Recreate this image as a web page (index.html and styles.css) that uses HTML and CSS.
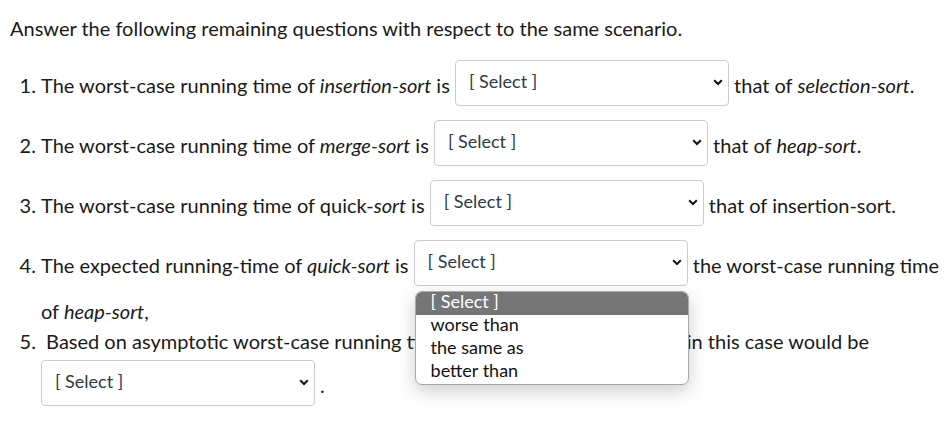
FILE: index.html
```html
<!DOCTYPE html>
<html lang="en">
<head>
<meta charset="utf-8">
<title>Quiz</title>
<link rel="stylesheet" href="styles.css">
</head>
<body>
<div class="page">
  <p class="intro">Answer the following remaining questions with respect to the same scenario.</p>
  <ol class="questions">
    <li>The worst-case running time of <em>insertion-sort</em> is <span class="sel"><span class="sel-text">[ Select ]</span><svg class="chev" width="10" height="7" viewBox="0 0 10 7"><path d="M1.2 1.3 L5 5 L8.8 1.3" fill="none" stroke="#111" stroke-width="2"/></svg></span> that of <em>selection-sort</em>.</li>
    <li>The worst-case running time of <em>merge-sort</em> is <span class="sel"><span class="sel-text">[ Select ]</span><svg class="chev" width="10" height="7" viewBox="0 0 10 7"><path d="M1.2 1.3 L5 5 L8.8 1.3" fill="none" stroke="#111" stroke-width="2"/></svg></span> that of <em>heap-sort</em>.</li>
    <li>The worst-case running time of quick-<em>sort</em> is <span class="sel"><span class="sel-text">[ Select ]</span><svg class="chev" width="10" height="7" viewBox="0 0 10 7"><path d="M1.2 1.3 L5 5 L8.8 1.3" fill="none" stroke="#111" stroke-width="2"/></svg></span> that of insertion-sort.</li>
    <li>The expected running-time of <em>quick-sort</em> is <span class="sel sel-open"><span class="sel-text">[ Select ]</span><svg class="chev" width="10" height="7" viewBox="0 0 10 7"><path d="M1.2 1.3 L5 5 L8.8 1.3" fill="none" stroke="#111" stroke-width="2"/></svg><span class="listbox"><span class="opt opt-active">[ Select ]</span><span class="opt">worse than</span><span class="opt">the same as</span><span class="opt">better than</span></span></span> the worst-case running time of <em>heap-sort</em>,</li>
    <li>&nbsp;Based on asymptotic worst-case running time, the best sorting algorithm in this case would be <span class="sel"><span class="sel-text">[ Select ]</span><svg class="chev" width="10" height="7" viewBox="0 0 10 7"><path d="M1.2 1.3 L5 5 L8.8 1.3" fill="none" stroke="#111" stroke-width="2"/></svg></span> .</li>
  </ol>
</div>
</body>
</html>
```

FILE: styles.css
```css
html, body {
  margin: 0;
  padding: 0;
  background: #ffffff;
}

.page {
  padding: 0 4px 0 10px;
  font-family: Lato, "Open Sans", sans-serif;
  font-size: 20px;
  line-height: 30px;
  color: #1a1a1a;
}

.intro {
  margin: 13px 0 0;
}

.questions {
  margin: 13px 0 0;
  padding-left: 31px;
}

.questions li {
  margin: 0;
}

.sel {
  display: inline-flex;
  align-items: center;
  box-sizing: border-box;
  width: 274px;
  height: 46px;
  margin: 4px 0 10px;
  padding: 0 5px 4px 13px;
  border: 1px solid #c9cdd1;
  border-radius: 4px;
  background: #fff;
  vertical-align: 5px;
  position: relative;
}

.sel-text {
  font-size: 18px;
  line-height: 22px;
  color: #2d3b45;
}

.chev {
  margin-left: auto;
  margin-top: 3px;
}

.listbox {
  position: absolute;
  left: 0;
  top: 50px;
  width: 274px;
  box-sizing: border-box;
  display: flex;
  flex-direction: column;
  background: #fff;
  border: 1px solid #a9a9a9;
  border-radius: 7px;
  overflow: hidden;
  box-shadow: 0 6px 18px rgba(0, 0, 0, 0.2);
  z-index: 5;
}

.opt {
  display: block;
  height: 23px;
  line-height: 19px;
  padding-left: 15px;
  font-size: 18px;
  color: #111;
}

.opt-active {
  background: #767676;
  color: #fff;
}
```
